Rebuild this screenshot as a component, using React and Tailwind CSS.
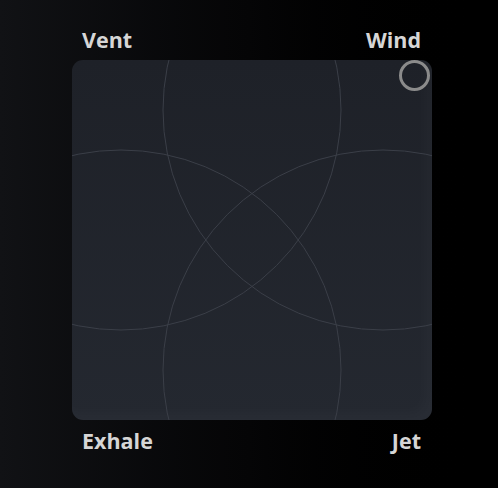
import React from "react";

const circles = [
  { cx: 311, cy: 50 },
  { cx: 49, cy: 50 },
  { cx: 49, cy: 310 },
  { cx: 311, cy: 310 },
];

function Label({ children }) {
  return (
    <span className="text-[21.5px] leading-[21px] font-bold text-[#d6d6d6]">{children}</span>
  );
}

export default function App() {
  return (
    <div
      className="w-[498px] h-[488px] overflow-hidden bg-linear-to-r from-[#111215] via-[#050506] to-black"
      style={{ fontFamily: '"Open Sans", "Noto Sans", sans-serif' }}
    >
      <div className="ml-[72px] pt-[29px] w-[360px] flex flex-col">
        <div className="flex justify-between pl-[10px] pr-[11px]">
          <Label>Vent</Label>
          <Label>Wind</Label>
        </div>

        <div className="relative mt-[10px] w-[360px] h-[360px] rounded-[11px] overflow-hidden bg-linear-to-b from-[#1e2128] to-[#242830] shadow-[inset_-8px_-8px_14px_rgba(255,255,255,0.025)]">
          <svg className="absolute inset-0" width="360" height="360" viewBox="0 0 360 360">
            {circles.map((c, i) => (
              <circle key={i} cx={c.cx} cy={c.cy} r="220" fill="none" stroke="#3b3f48" strokeWidth="1" />
            ))}
          </svg>
          <div className="absolute left-[327px] top-0 w-[31px] h-[31px] rounded-full border-[3px] border-[#8b8b8b]" />
        </div>

        <div className="flex justify-between pl-[10px] pr-[11px] mt-[10px]">
          <Label>Exhale</Label>
          <Label>Jet</Label>
        </div>
      </div>
    </div>
  );
}
